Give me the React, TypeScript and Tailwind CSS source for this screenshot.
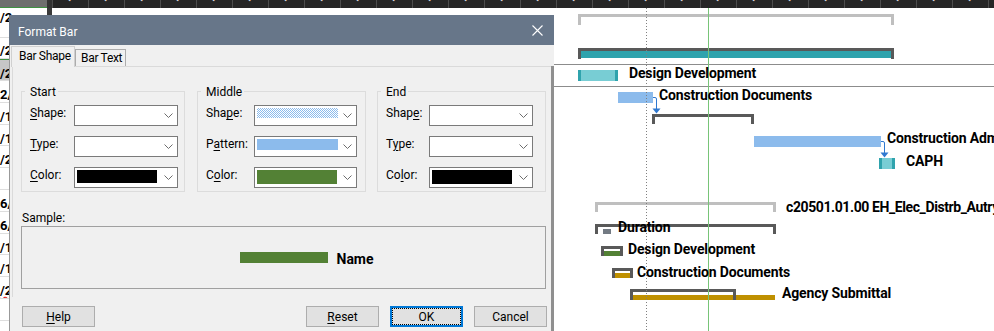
import React from "react";

function U({ children }: { children: React.ReactNode }) {
  return <span className="underline underline-offset-[2px]">{children}</span>;
}

function Chevron() {
  return (
    <svg width="9" height="5" viewBox="0 0 9 5" className="shrink-0">
      <path d="M0.5 0.5 L4.5 4.5 L8.5 0.5" fill="none" stroke="#6d6d6d" strokeWidth="1" />
    </svg>
  );
}

function Combo({ children }: { children?: React.ReactNode }) {
  return (
    <div className="h-[21px] border border-[#7a7a7a] bg-white flex items-start pt-[2px] pl-[2px] pr-[4px]">
      <div className="flex-1 flex">{children}</div>
      <div className="self-center -mt-[2px]">
        <Chevron />
      </div>
    </div>
  );
}

function Group({
  title,
  className,
  children,
}: {
  title: string;
  className: string;
  children: React.ReactNode;
}) {
  return (
    <div className={`relative border border-[#dcdcdc] pt-[13px] pb-[3px] pl-[8px] ${className}`}>
      <span className="absolute -top-[8px] left-[3px] bg-[#f0f0f0] pl-[5px] pr-[2px] leading-[16px]">
        {title}
      </span>
      {children}
    </div>
  );
}

function Btn({ children, focus }: { children: React.ReactNode; focus?: boolean }) {
  return (
    <div
      className={`w-[73px] h-[21px] flex items-center justify-center bg-[#e1e1e1] ${
        focus
          ? "border-2 border-[#0078d7] outline outline-1 outline-dotted outline-black outline-offset-[-3px]"
          : "border border-[#adadad]"
      }`}
    >
      {children}
    </div>
  );
}

const leftRows: { t: string; hl?: boolean; sq?: boolean }[] = [
  { t: "/2" },
  { t: "/2", hl: true },
  { t: "2/" },
  { t: "/1" },
  { t: "/1" },
  { t: "/2" },
  { t: "" },
  { t: "6/" },
  { t: "6/" },
  { t: "/1" },
  { t: "/1" },
  { t: "/2", sq: true },
  { t: "" },
];

const labelCls = "absolute whitespace-nowrap font-bold text-[14px] leading-[16px] z-20";

export default function App() {
  return (
    <div className="relative w-[994px] h-[331px] overflow-hidden bg-white font-['Roboto',sans-serif] text-black">
      <div className="flex flex-col h-full">
        {/* timescale header */}
        <div className="flex h-[8px] shrink-0">
          <div className="w-[47px] bg-[#6e6e6e] border-b border-[#3f9142]" />
          <div className="w-[5px] bg-[#333333]" />
          <div className="flex-1 flex bg-[#262626] overflow-hidden">
            {Array.from({ length: 27 }).map((_, i) => (
              <div
                key={i}
                className="w-[36px] shrink-0 border-l border-[#4d4d4d] flex justify-center overflow-hidden"
              >
                <span className="text-[10px] leading-[10px] -mt-[8px] text-[#e8e8e8] font-bold">Q1</span>
              </div>
            ))}
          </div>
        </div>

        <div className="flex flex-1 min-h-0">
          {/* left table column */}
          <div className="w-[47px] flex flex-col text-[13px] font-bold leading-[16px]">
            <div className="h-[29.5px] shrink-0 pt-[2px] border-b border-[#dedede] whitespace-nowrap overflow-hidden">
              /2
            </div>
            {leftRows.map((r, i) => (
              <div
                key={i}
                className={`h-[21.8px] shrink-0 flex items-center pt-[7px] border-b border-[#dedede] whitespace-nowrap overflow-hidden ${
                  r.hl ? "bg-[#c6c6c6] border-t border-t-[#3f9142]" : ""
                }`}
              >
                <span className={r.sq ? "underline decoration-wavy decoration-[#e02020]" : ""}>{r.t}</span>
              </div>
            ))}
          </div>
          <div className="w-[5px] bg-[#3a3a3a]" />

          {/* gantt chart */}
          <div className="relative flex-1 overflow-hidden">
            {/* selected row lines */}
            <div className="absolute left-0 right-0 top-[56px] h-[1px] bg-[#8c8c8c]" />
            <div className="absolute left-0 right-0 top-[78px] h-[1px] bg-[#8c8c8c]" />

            {/* bars */}
            <div className="absolute left-[526px] top-[6px] w-[316px] h-[11px] border-t-[3px] border-x-[3px] border-[#bfbfbf]" />
            <div className="absolute left-[526px] top-[40px] w-[316px] h-[11px] border-t-[3px] border-x-[3px] border-[#595959]">
              <div className="h-[7px] bg-[#2fa3ad]" />
            </div>
            <div className="absolute left-[526px] top-[62px] w-[40px] h-[11px] bg-[#78cdd4] border-x-[3px] border-[#2fa3ad]" />
            <div className="absolute left-[566px] top-[84px] w-[35px] h-[11px] bg-[#8cbbec]" />
            <div className="absolute left-[600px] top-[106px] w-[102px] h-[10px] border-t-[3px] border-x-[3px] border-[#595959]" />
            <div className="absolute left-[702px] top-[128px] w-[127px] h-[11px] bg-[#8cbbec]" />
            <div className="absolute left-[827px] top-[150px] w-[16px] h-[11px] bg-[#78cdd4] border-x-[3px] border-[#2fa3ad]" />

            <div className="absolute left-[543px] top-[194px] w-[181px] h-[10px] border-t-[3px] border-x-[3px] border-[#bfbfbf]" />
            <div className="absolute left-[543px] top-[216px] w-[181px] h-[10px] border-t-[3px] border-x-[3px] border-[#595959]" />
            <div className="absolute left-[551px] top-[221px] w-[8px] h-[5px] bg-[#737a83]" />
            <div className="absolute left-[549px] top-[238px] w-[22px] h-[10px] border-t-[3px] border-x-[3px] border-[#595959] flex items-end">
              <div className="w-full h-[5px] bg-[#538135]" />
            </div>
            <div className="absolute left-[560px] top-[260px] w-[21px] h-[10px] border-t-[3px] border-x-[3px] border-[#595959] flex items-end">
              <div className="w-full h-[5px] bg-[#bf9000]" />
            </div>
            <div className="absolute left-[581px] top-[287px] w-[142px] h-[5px] bg-[#bf9000]" />
            <div className="absolute left-[578px] top-[281px] w-[106px] h-[11px] border-t-[3px] border-x-[3px] border-[#595959]" />

            {/* vertical lines */}
            <div className="absolute left-[594px] top-0 bottom-0 w-[1px] z-10 bg-[repeating-linear-gradient(to_bottom,#808080_0px_1px,transparent_1px_3px)]" />
            <div className="absolute left-[656px] top-0 bottom-0 w-[1px] z-10 bg-[#78c478]" />

            {/* links */}
            <svg className="absolute left-0 top-0 z-10" width="942" height="323">
              <path d="M601 89.5 H603 Q604.5 89.5 604.5 91 V101" fill="none" stroke="#2f78d0" strokeWidth="1" />
              <path d="M600.5 100.5 L608.5 100.5 L604.5 105.5 Z" fill="#2f78d0" />
              <path d="M829 133.5 H831 Q832.5 133.5 832.5 135 V145" fill="none" stroke="#2f78d0" strokeWidth="1" />
              <path d="M828.5 144.5 L836.5 144.5 L832.5 149.5 Z" fill="#2f78d0" />
            </svg>

            {/* labels */}
            <div className={`${labelCls} tracking-[-0.15px] left-[577px] top-[57px]`}>Design Development</div>
            <div className={`${labelCls} tracking-[-0.15px] left-[607px] top-[79px]`}>Construction Documents</div>
            <div className={`${labelCls} tracking-[-0.15px] left-[835px] top-[122px]`}>Construction Administration</div>
            <div className={`${labelCls} tracking-[-0.15px] left-[854px] top-[145px]`}>CAPH</div>
            <div className={`${labelCls} tracking-[-0.4px] left-[734px] top-[191px]`}>c20501.01.00 EH_Elec_Distrb_Autry</div>
            <div className={`${labelCls} tracking-[-0.15px] left-[566px] top-[211px]`}>Duration</div>
            <div className={`${labelCls} tracking-[-0.15px] left-[576px] top-[233px]`}>Design Development</div>
            <div className={`${labelCls} tracking-[-0.15px] left-[585px] top-[256px]`}>Construction Documents</div>
            <div className={`${labelCls} tracking-[-0.15px] left-[730px] top-[277px]`}>Agency Submittal</div>
          </div>
        </div>
      </div>

      {/* Format Bar dialog */}
      <div className="absolute left-[9px] top-[15px] z-30 w-[545px] h-[330px] flex flex-col bg-[#f0f0f0] text-[12px] leading-[16px] text-black">
        <div className="h-[30px] shrink-0 bg-[#677689] flex items-center justify-between pl-[9px] pr-[11px] pt-[3px] text-white">
          <span>Format Bar</span>
          <svg width="11" height="11" viewBox="0 0 11 11" className="-mt-[3px]">
            <path d="M0.5 0.5 L10.5 10.5 M10.5 0.5 L0.5 10.5" stroke="#ffffff" strokeWidth="1.1" />
          </svg>
        </div>

        <div className="flex-1 flex flex-col border-l border-[#999999]">
          {/* tabs */}
          <div className="h-[21px] shrink-0 flex items-end pl-[1px] tracking-[-0.3px]">
            <div className="relative z-10 translate-y-[1px] h-[21px] w-[64px] border-x border-t border-[#d0d0d0] bg-[#f0f0f0] pl-[7px] pt-[1px]">
              Bar Shape
            </div>
            <div className="h-[17px] w-[51px] border-x border-t border-[#acacac] pl-[5px]">Bar Text</div>
          </div>

          <div className="flex-1 flex flex-col border-r-[3px] border-[#8f8f8f]">
            <div className="ml-[2px] border-l border-t border-[#dadada] pl-[8px] pt-[24px] pb-[8px]">
              <div className="flex">
                <Group title="Start" className="w-[164px]">
                  <div className="grid grid-cols-[44px_104px] gap-y-[10px]">
                    <span>
                      <U>S</U>hape:
                    </span>
                    <Combo />
                    <span>
                      <U>T</U>ype:
                    </span>
                    <Combo />
                    <span>
                      <U>C</U>olor:
                    </span>
                    <Combo>
                      <div className="w-[80px] h-[13px] bg-black" />
                    </Combo>
                  </div>
                </Group>
                <Group title="Middle" className="w-[169px] ml-[12px]">
                  <div className="grid grid-cols-[48px_103px] gap-y-[10px]">
                    <span>
                      Sha<U>p</U>e:
                    </span>
                    <Combo>
                      <div className="w-[81px] h-[10px] bg-[repeating-conic-gradient(#8cbbec_0%_25%,#ffffff_0%_50%)] bg-[length:2px_2px]" />
                    </Combo>
                    <span>
                      P<U>a</U>ttern:
                    </span>
                    <Combo>
                      <div className="w-[81px] h-[11px] bg-[#8cbbec]" />
                    </Combo>
                    <span>
                      C<U>o</U>lor:
                    </span>
                    <Combo>
                      <div className="w-[80px] h-[14px] bg-[#538135]" />
                    </Combo>
                  </div>
                </Group>
                <Group title="End" className="w-[169px] ml-[11px]">
                  <div className="grid grid-cols-[43px_104px] gap-y-[10px]">
                    <span>
                      Shap<U>e</U>:
                    </span>
                    <Combo />
                    <span>
                      T<U>y</U>pe:
                    </span>
                    <Combo />
                    <span>
                      Co<U>l</U>or:
                    </span>
                    <Combo>
                      <div className="w-[80px] h-[14px] bg-black" />
                    </Combo>
                  </div>
                </Group>
              </div>

              <div className="mt-[18px] pl-[1px]">Sample:</div>
              <div className="w-[525px] h-[63px] border border-[#a0a0a0] flex items-center justify-center">
                <div className="relative w-[88px] h-[11px] bg-[#538135]">
                  <span className="absolute left-[97px] -top-[1px] font-bold text-[14px] leading-[16px] whitespace-nowrap">
                    Name
                  </span>
                </div>
              </div>
            </div>

            <div className="mt-[9px] flex pl-[12px] pr-[4px]">
              <Btn>
                <U>H</U>elp
              </Btn>
              <div className="ml-auto flex gap-[11px]">
                <Btn>
                  <U>R</U>eset
                </Btn>
                <Btn focus>OK</Btn>
                <Btn>Cancel</Btn>
              </div>
            </div>
          </div>
        </div>
      </div>
    </div>
  );
}
